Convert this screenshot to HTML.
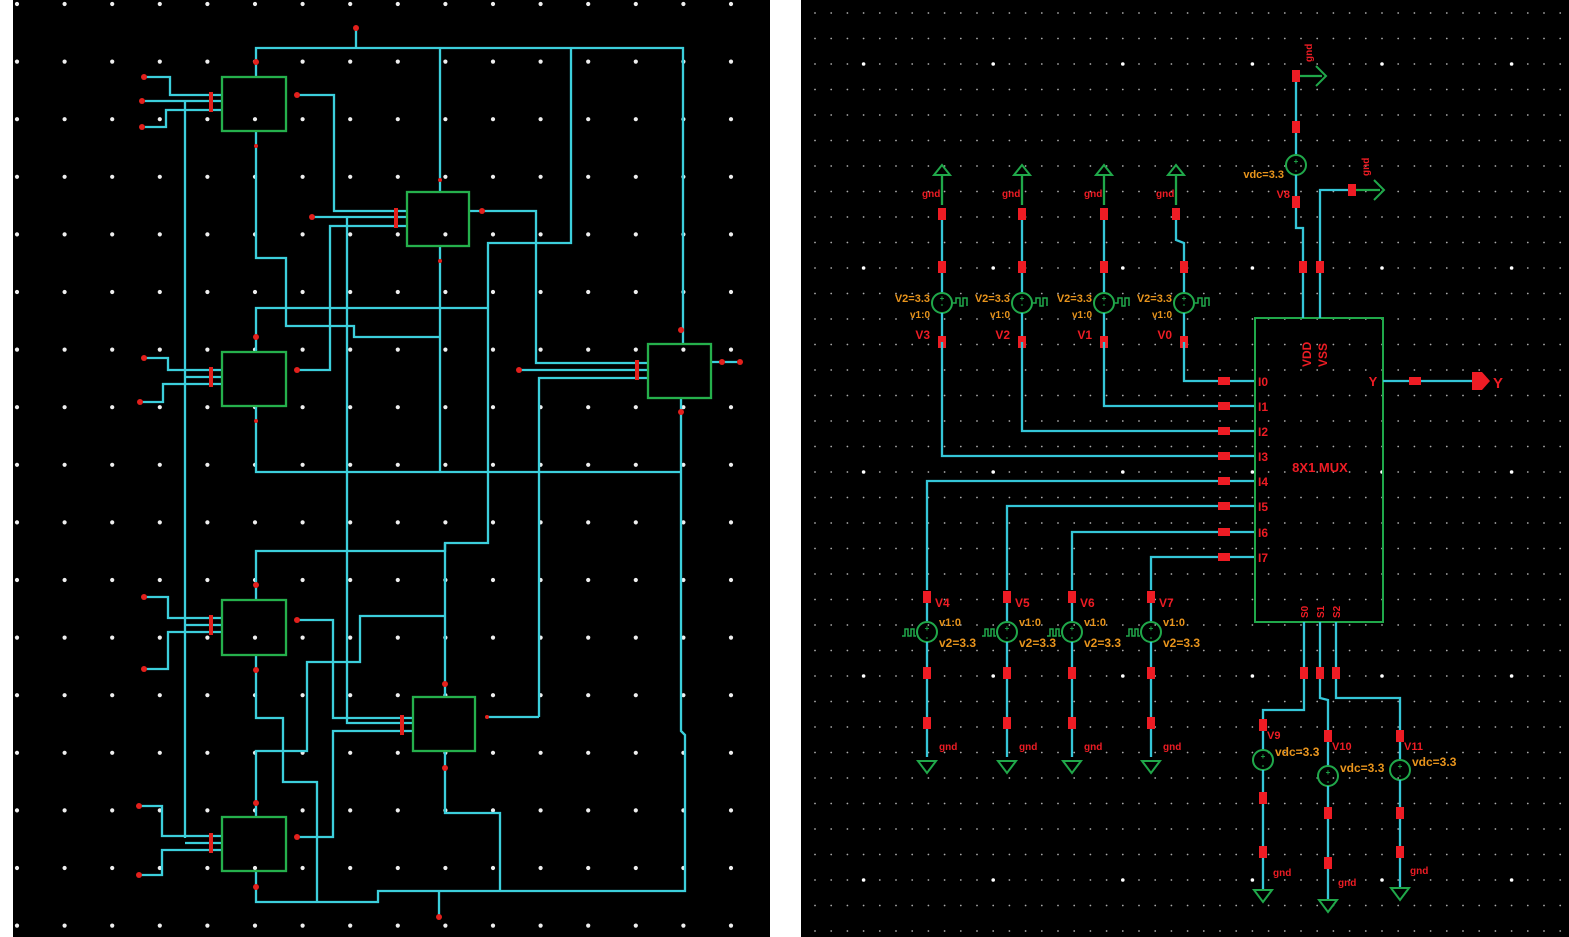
<!DOCTYPE html>
<html><head><meta charset="utf-8"><style>
html,body{margin:0;padding:0;background:#fff;}
svg{display:block;}
text{font-family:"Liberation Sans",sans-serif;font-weight:bold;}
</style></head><body>
<svg id="s" width="1569" height="937" xmlns="http://www.w3.org/2000/svg">
<rect x="0" y="0" width="1569" height="937" fill="#fff"/>
<rect x="13" y="0" width="757" height="937" fill="#000"/>
<rect x="801" y="0" width="768" height="937" fill="#000"/>
<g id="dots"></g>
<g fill="none" stroke="#3ccfdc" stroke-width="2.3">
<polyline points="356,27 356,48"/>
<polyline points="256,77 256,48 683,48 683,344"/>
<polyline points="681,398 681,731 685,735 685,891 378,891 378,902 256,902 256,871"/>
<polyline points="439,891 439,917"/>
<polyline points="185,100 185,838"/>
<polyline points="440,48 440,192"/>
<polyline points="440,246 440,472"/>
<polyline points="256,131 256,258 286,258 286,326 354,326 354,337 440,337"/>
<polyline points="256,406 256,472 681,472"/>
<polyline points="256,352 256,308 488,308"/>
<polyline points="571,48 571,243 488,243 488,543 445,543 445,551 256,551 256,600"/>
<polyline points="297,95 334,95 334,211 407,211"/>
<polyline points="312,217 407,217"/>
<polyline points="297,370 330,370 330,226 407,226"/>
<polyline points="347,216 347,723 413,723"/>
<polyline points="469,211 536,211 536,363 648,363"/>
<polyline points="519,370 648,370"/>
<polyline points="539,717 539,378 648,378"/>
<polyline points="711,362 740,362"/>
<polyline points="445,543 445,697"/>
<polyline points="445,616 360,616 360,662 307,662 307,751 256,751 256,817"/>
<polyline points="297,620 333,620 333,718 413,718"/>
<polyline points="297,837 333,837 333,731 413,731"/>
<polyline points="256,655 256,718 283,718 283,782 317,782 317,902"/>
<polyline points="486,717 539,717"/>
<polyline points="445,751 445,813 500,813 500,891"/>
<polyline points="145,77 170,77 170,95 222,95"/><polyline points="145,101 222,101"/><polyline points="145,127 166,127 166,110 222,110"/>
<polyline points="145,358 168,358 168,370 222,370"/><polyline points="185,377 222,377"/><polyline points="141,402 163,402 163,384 222,384"/>
<polyline points="145,597 168,597 168,618 222,618"/><polyline points="185,625 222,625"/><polyline points="145,669 168,669 168,632 222,632"/>
<polyline points="140,806 162,806 162,836 222,836"/><polyline points="185,843 222,843"/><polyline points="140,875 162,875 162,850 222,850"/>
</g>
<g fill="none" stroke="#25b04c" stroke-width="2.3">
<rect x="222" y="77" width="64" height="54"/><rect x="407" y="192" width="62" height="54"/>
<rect x="222" y="352" width="64" height="54"/><rect x="648" y="344" width="63" height="54"/>
<rect x="222" y="600" width="64" height="55"/><rect x="413" y="697" width="62" height="54"/>
<rect x="222" y="817" width="64" height="54"/>
</g>
<g fill="#e3201c">
<circle cx="356" cy="28" r="3"/><circle cx="256" cy="62" r="3"/><circle cx="297" cy="95" r="3"/><circle cx="256" cy="146" r="2"/>
<circle cx="440" cy="180" r="2"/><circle cx="482" cy="211" r="3"/><circle cx="440" cy="261" r="2"/>
<circle cx="256" cy="337" r="3"/><circle cx="297" cy="370" r="3"/><circle cx="256" cy="421" r="2"/>
<circle cx="681" cy="330" r="3"/><circle cx="722" cy="362" r="3"/><circle cx="740" cy="362" r="3"/><circle cx="681" cy="412" r="3"/>
<circle cx="256" cy="585" r="3"/><circle cx="297" cy="620" r="3"/><circle cx="256" cy="670" r="3"/>
<circle cx="445" cy="684" r="3"/><circle cx="487" cy="717" r="2"/><circle cx="445" cy="768" r="3"/>
<circle cx="256" cy="803" r="3"/><circle cx="297" cy="837" r="3"/><circle cx="256" cy="887" r="3"/><circle cx="439" cy="917" r="3"/>
<circle cx="144" cy="77" r="3"/><circle cx="142" cy="101" r="3"/><circle cx="142" cy="127" r="3"/>
<circle cx="144" cy="358" r="3"/><circle cx="140" cy="402" r="3"/><circle cx="312" cy="217" r="3"/><circle cx="519" cy="370" r="3"/>
<circle cx="144" cy="597" r="3"/><circle cx="144" cy="669" r="3"/><circle cx="139" cy="806" r="3"/><circle cx="139" cy="875" r="3"/>
<rect x="209" y="92" width="4" height="20"/><rect x="209" y="367" width="4" height="20"/><rect x="209" y="615" width="4" height="20"/><rect x="209" y="833" width="4" height="20"/>
<rect x="394" y="208" width="4" height="20"/><rect x="400" y="715" width="4" height="20"/><rect x="635" y="360" width="4" height="20"/>
</g>
<g id="rp" font-size="10"></g>
</svg>
<script>
var NS="http://www.w3.org/2000/svg";
function el(t,a,p){var e=document.createElementNS(NS,t);for(var k in a)e.setAttribute(k,a[k]);(p||document.getElementById('rp')).appendChild(e);return e;}
var d=document.getElementById('dots');
for(var x=17;x<770;x+=47.6)for(var y=4;y<937;y+=57.6)el('circle',{cx:x,cy:y,r:2.1,fill:'#eee'},d);
for(var i=0;;i++){var x=815+i*16.2;if(x>1566)break;for(var j=0;;j++){var y=13+j*25.5;if(y>935)break;var big=(i%8==3)&&(j%8==2);el('circle',{cx:x,cy:y,r:big?1.8:0.9,fill:big?'#fff':'#aaa'},d);}}
var C='#35c6d8',G='#20a84a',R='#ee1c24',O='#e8941c';
function line(pts){el('polyline',{points:pts,fill:'none',stroke:C,'stroke-width':2.3});}
function gline(pts){el('polyline',{points:pts,fill:'none',stroke:G,'stroke-width':2.3});}
function sq(x,y){el('rect',{x:x-4,y:y-6,width:8,height:12,fill:R});}
function sqh(x,y){el('rect',{x:x-6,y:y-4,width:12,height:8,fill:R});}
function txt(x,y,s,c,sz,anc){var t=el('text',{x:x,y:y,fill:c,'font-size':sz||10,'text-anchor':anc||'start'});t.textContent=s;return t;}
function src(x,y,plusTop){el('circle',{cx:x,cy:y,r:10,fill:'none',stroke:G,'stroke-width':2});txt(x,y+(plusTop?-1:4),plusTop?'+':'-',G,8,'middle');txt(x,y+(plusTop?8:-2),plusTop?'-':'+',G,8,'middle');}
function gndUp(x,y){el('polygon',{points:(x-8)+','+(y+10)+' '+(x+8)+','+(y+10)+' '+x+','+y,fill:'none',stroke:G,'stroke-width':2});}
function gndDn(x,y){el('polygon',{points:(x-9)+','+y+' '+(x+9)+','+y+' '+x+','+(y+12),fill:'none',stroke:G,'stroke-width':2});}
var tx=[942,1022,1104,1176],tn=['V3','V2','V1','V0'];
tx.forEach(function(x,k){gndUp(x,165);gline(x+',175 '+x+',205');
 if(k==3){line(x+',214 '+x+',240 '+(x+8)+',243 '+(x+8)+',293');x=x+8;}else line(x+',214 '+x+',293');
 src(x,303,false);line(x+',313 '+x+',342');sq(tx[k],214);sq(x,267);sq(x,342);
 txt(tx[k]-20,197,'gnd',R,10);txt(x-12,302,'V2=3.3',O,11,'end');txt(x-12,318,'v1:0',O,10,'end');txt(x-12,339,tn[k],R,12,'end');
 el('polyline',{points:(x+11)+','+303+' '+(x+14)+',303 '+(x+14)+',298 '+(x+18)+',298 '+(x+18)+',306 '+(x+21)+',306 '+(x+21)+',298 '+(x+25)+',298 '+(x+25)+',306',fill:'none',stroke:G,'stroke-width':1.5});
});
var iy=[381,406,431,456,481,506,532,557];
line('1184,342 1184,381 1255,381');line('1104,342 1104,406 1255,406');line('1022,342 1022,431 1255,431');line('942,342 942,456 1255,456');
line('927,590 927,481 1255,481');line('1007,590 1007,506 1255,506');line('1072,590 1072,532 1255,532');line('1151,590 1151,557 1255,557');
iy.forEach(function(y,k){sqh(1224,y);txt(1258,y+5,'I'+k,R,12);});
el('rect',{x:1255,y:318,width:128,height:304,fill:'none',stroke:G,'stroke-width':2});
txt(1320,472,'8X1 MUX',R,13,'middle');
var t1=txt(0,0,'VDD',R,12);t1.setAttribute('transform','translate(1311,367) rotate(-90)');
var t2=txt(0,0,'VSS',R,12);t2.setAttribute('transform','translate(1327,367) rotate(-90)');
['S0','S1','S2'].forEach(function(s,k){var t=txt(0,0,s,R,10);t.setAttribute('transform','translate('+(1308+k*16)+',618) rotate(-90)');});
txt(1373,386,'Y',R,13,'middle');
line('1383,381 1475,381');sqh(1415,381);el('polygon',{points:'1472,372 1482,372 1490,381 1482,390 1472,390',fill:R});txt(1493,388,'Y',R,15);
line('1296,76 1296,155');gline('1296,76 1322,76');el('polyline',{points:'1316,66 1326,76 1316,86',fill:'none',stroke:G,'stroke-width':2});
sq(1296,76);sq(1296,127);src(1296,165,true);line('1296,175 1296,228 1303,228 1303,318');sq(1296,202);sq(1303,267);
txt(1284,178,'vdc=3.3',O,11,'end');txt(1290,198,'V8',R,11,'end');
var tg=txt(0,0,'gnd',R,10);tg.setAttribute('transform','translate(1312,62) rotate(-90)');
line('1320,318 1320,190 1352,190');gline('1352,190 1380,190');el('polyline',{points:'1374,180 1384,190 1374,200',fill:'none',stroke:G,'stroke-width':2});
sq(1320,267);sq(1352,190);var tg2=txt(0,0,'gnd',R,10);tg2.setAttribute('transform','translate(1369,176) rotate(-90)');
var bx=[927,1007,1072,1151],bn=['V4','V5','V6','V7'];
bx.forEach(function(x,k){line(x+',597 '+x+',622');src(x,632,true);line(x+',642 '+x+',757');gndDn(x,761);
 sq(x,597);sq(x,673);sq(x,723);txt(x+8,607,bn[k],R,12);txt(x+12,626,'v1:0',O,11);txt(x+12,647,'v2=3.3',O,12);txt(x+12,750,'gnd',R,10);
 el('polyline',{points:(x-25)+',636 '+(x-22)+',636 '+(x-22)+',629 '+(x-19)+',629 '+(x-19)+',636 '+(x-16)+',636 '+(x-16)+',629 '+(x-13)+',629 '+(x-13)+',636 '+(x-11)+',636',fill:'none',stroke:G,'stroke-width':1.5});
});
line('1304,622 1304,710 1263,710 1263,750');line('1320,622 1320,698 1328,700 1328,766');line('1336,622 1336,698 1400,698 1400,760');
sq(1304,673);sq(1320,673);sq(1336,673);
[[1263,760,725,798,852,890,'V9'],[1328,776,736,813,863,900,'V10'],[1400,770,736,813,852,888,'V11']].forEach(function(a){
 var x=a[0];src(x,a[1],true);line(x+','+(a[1]+10)+' '+x+','+(a[5]));gndDn(x,a[5]);sq(x,a[2]);sq(x,a[3]);sq(x,a[4]);
 txt(x+4,a[2]+14,a[6],R,11);txt(x+12,a[1]-4,'vdc=3.3',O,12);txt(x+10,a[5]-14,'gnd',R,10);
});
</script>
</body></html>
